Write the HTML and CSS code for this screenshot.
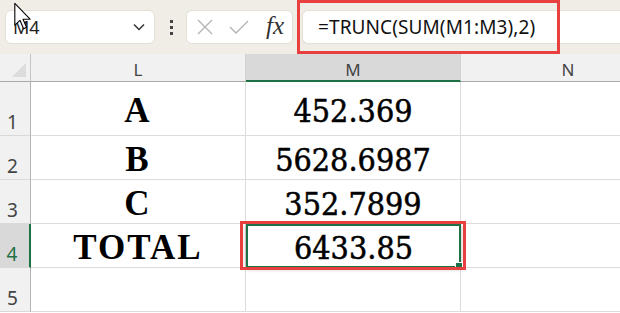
FILE: index.html
```html
<!DOCTYPE html>
<html>
<head>
	<meta charset="utf-8">
	<meta name="viewport" content="width=device-width">
	<title>TRUNC</title>
	<link rel="stylesheet" href="styles.css">
</head>
<body>
	<div class="sheet">
		<div class="toolbar">
			<div class="namebox">
				<span class="ref">M4</span>
				<svg class="chev" width="12" height="8" viewBox="0 0 12 8">
					<path d="M1 1.5 L6 6.5 L11 1.5" fill="none" stroke="#333" stroke-width="1.5"/>
				</svg>
			</div>
			<div class="dots"><span></span><span></span><span></span></div>
			<div class="actions">
				<svg width="18" height="18" viewBox="0 0 18 18">
					<path d="M2 2 L16 16 M16 2 L2 16" stroke="#b4b4b4" stroke-width="1.4" fill="none"/>
				</svg>
				<svg width="20" height="16" viewBox="0 0 20 16">
					<path d="M1 8 L7 14 L19 2" stroke="#b4b4b4" stroke-width="1.4" fill="none"/>
				</svg>
				<span class="fx">fx</span>
			</div>
			<div class="formula">=TRUNC(SUM(M1:M3),2)</div>
		</div>

		<div class="grid">
			<div class="corner"></div>
			<div class="colhead">L</div>
			<div class="colhead sel">M</div>
			<div class="colhead">N</div>

			<div class="rowhead">1</div>
			<div class="cell label">A</div>
			<div class="cell num">452.369</div>
			<div class="cell"></div>

			<div class="rowhead">2</div>
			<div class="cell label">B</div>
			<div class="cell num">5628.6987</div>
			<div class="cell"></div>

			<div class="rowhead">3</div>
			<div class="cell label">C</div>
			<div class="cell num">352.7899</div>
			<div class="cell"></div>

			<div class="rowhead sel">4</div>
			<div class="cell label">TOTAL</div>
			<div class="cell num active">6433.85</div>
			<div class="cell"></div>

			<div class="rowhead">5</div>
			<div class="cell"></div>
			<div class="cell"></div>
			<div class="cell"></div>
		</div>

		<div class="mark mark-formula"></div>
		<div class="mark mark-cell"></div>

		<svg class="cursor" width="20" height="30" viewBox="0 0 14 22">
			<path d="M1 1 L1 17 L4.8 13.4 L7.4 19.6 L9.6 18.6 L7 12.6 L12.2 12.6 Z" fill="#fff" stroke="#000" stroke-width="0.8" stroke-linejoin="round"/>
		</svg>
	</div>
</body>
</html>
```

FILE: styles.css
```css
* {
	box-sizing: border-box;
}

body {
	margin: 0;
	background: #fff;
	font-family: "Noto Sans", "Open Sans", sans-serif;
}

.sheet {
	position: relative;
	width: 620px;
	height: 313px;
	overflow: hidden;
}

/* formula bar */
.toolbar {
	display: flex;
	align-items: center;
	height: 54px;
	padding-left: 5px;
	background: #efede5;
}

.namebox {
	display: flex;
	align-items: center;
	justify-content: space-between;
	width: 150px;
	height: 34px;
	padding: 0 9px 0 7px;
	background: #fff;
	border: 1px solid #e2e0d8;
	border-radius: 6px;
	color: #222;
	font-size: 18px;
}

.dots {
	display: flex;
	flex-direction: column;
	gap: 3px;
	margin: 0 13px 0 15px;
}
.dots span {
	width: 3px;
	height: 3px;
	background: #444;
}

.actions {
	display: flex;
	align-items: center;
	gap: 15px;
	width: 107px;
	height: 34px;
	padding-left: 9px;
	background: #fff;
	border: 1px solid #e2e0d8;
	border-radius: 6px;
}

.fx {
	font-family: "Liberation Serif", serif;
	font-style: italic;
	font-size: 25px;
	color: #333;
	margin: -3px 0 0 2px;
}

.formula {
	flex: 1;
	height: 34px;
	margin-left: 9px;
	padding-left: 15px;
	line-height: 33px;
	background: #fff;
	border: 1px solid #e2e0d8;
	border-right: none;
	border-radius: 6px 0 0 6px;
	color: #111;
	font-size: 19px;
	letter-spacing: 0.1px;
	white-space: nowrap;
}

/* worksheet */
.grid {
	display: grid;
	grid-template-columns: 31px 215px 215px 215px;
	grid-template-rows: 28px 54px 44px 44px 44px 44px;
}

.corner {
	position: relative;
	background: #f1f1f1;
	border-right: 1px solid #c6c6c6;
	border-bottom: 1px solid #a9a9a9;
}
.corner::after {
	content: "";
	position: absolute;
	right: 4px;
	bottom: 4px;
	border-left: 14px solid transparent;
	border-bottom: 14px solid #dcdcdc;
}

.colhead {
	display: flex;
	align-items: center;
	justify-content: center;
	padding-top: 4px;
	background: #f1f1f1;
	border-right: 1px solid #d2d2d2;
	border-bottom: 1px solid #a9a9a9;
	color: #444;
	font-size: 17px;
}
.colhead.sel {
	background: #d9d9d9;
	border-bottom: 2px solid #1e7145;
}

.rowhead {
	display: flex;
	align-items: flex-end;
	justify-content: center;
	padding: 0 5px 0 0;
	background: #f1f1f1;
	border-right: 1px solid #b4b4b4;
	border-bottom: 1px solid #d9d9d9;
	color: #444;
	font-size: 19px;
}
.rowhead.sel {
	background: #d9d9d9;
	border-right: 2px solid #1e7145;
	color: #1e7145;
}

.cell {
	display: flex;
	align-items: center;
	justify-content: center;
	padding-top: 4px;
	border-right: 1px solid #dcdcdc;
	border-bottom: 1px solid #dcdcdc;
	color: #000;
}

.label {
	font-family: "Liberation Serif", serif;
	font-weight: bold;
	font-size: 35px;
	letter-spacing: 2px;
}

.num {
	font-family: "DejaVu Serif Condensed", "DejaVu Serif", serif;
	font-size: 32px;
	-webkit-text-stroke: 0.5px #000;
}

.active {
	position: relative;
	border: 2px solid #1e7145;
	box-shadow: 0 1px 4px rgba(0, 0, 0, 0.3);
}
.active::after {
	content: "";
	position: absolute;
	right: -4px;
	bottom: -4px;
	width: 6px;
	height: 6px;
	background: #1e7145;
	border: 1px solid #fff;
}

/* red call-outs drawn over the screenshot */
.mark {
	position: absolute;
	border: 3px solid #e8403f;
}
.mark-formula {
	left: 297px;
	top: 0;
	width: 263px;
	height: 54px;
}
.mark-cell {
	left: 240px;
	top: 221px;
	width: 226px;
	height: 49px;
}

.cursor {
	position: absolute;
	left: 13px;
	top: 2px;
}
```
